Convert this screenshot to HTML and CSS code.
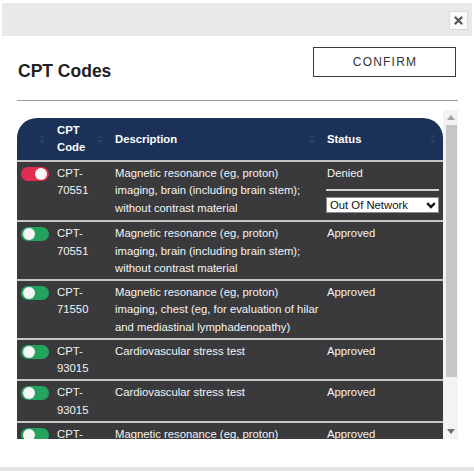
FILE: index.html
```html
<!DOCTYPE html>
<html lang="en">
<head>
<meta charset="utf-8">
<title>CPT Codes</title>
<link rel="stylesheet" href="styles.css">
</head>
<body>
<div class="modal">
  <div class="topbar">
    <button class="close" aria-label="Close">
      <svg width="9" height="9" viewBox="0 0 9 9"><path d="M1.5 1.5L7.5 7.5M7.5 1.5L1.5 7.5" stroke="#555" stroke-width="2.3" stroke-linecap="round"/></svg>
    </button>
  </div>
  <div class="head">
    <h2 class="title">CPT Codes</h2>
    <button class="confirm">CONFIRM</button>
  </div>
  <div class="divider"></div>
  <div class="scroller">
    <div class="viewport">
      <table class="codes">
        <colgroup><col class="c-toggle"><col class="c-code"><col class="c-desc"><col class="c-status"></colgroup>
        <thead>
          <tr><th class="sort"></th><th class="sort">CPT Code</th><th class="sort">Description</th><th class="sort">Status</th></tr>
        </thead>
        <tbody>
          <tr>
            <td class="tcell"><span class="toggle denied"><span class="knob"></span></span></td>
            <td>CPT-70551</td>
            <td class="desc">Magnetic resonance (eg, proton) imaging, brain (including brain stem); without contrast material</td>
            <td class="status">
              <span>Denied</span>
              <div class="status-rule"></div>
              <div class="select-wrap">
                <select class="reason"><option>Out Of Network</option></select>
                <svg class="chev" width="10" height="7" viewBox="0 0 10 7"><path d="M1.2 1.2L5 5L8.8 1.2" fill="none" stroke="#111" stroke-width="2.4"/></svg>
              </div>
            </td>
          </tr>
          <tr>
            <td class="tcell"><span class="toggle"><span class="knob"></span></span></td>
            <td>CPT-70551</td>
            <td class="desc">Magnetic resonance (eg, proton) imaging, brain (including brain stem); without contrast material</td>
            <td class="status">Approved</td>
          </tr>
          <tr>
            <td class="tcell"><span class="toggle"><span class="knob"></span></span></td>
            <td>CPT-71550</td>
            <td class="desc">Magnetic resonance (eg, proton) imaging, chest (eg, for evaluation of hilar and mediastinal lymphadenopathy)</td>
            <td class="status">Approved</td>
          </tr>
          <tr>
            <td class="tcell"><span class="toggle"><span class="knob"></span></span></td>
            <td>CPT-93015</td>
            <td class="desc">Cardiovascular stress test</td>
            <td class="status">Approved</td>
          </tr>
          <tr>
            <td class="tcell"><span class="toggle"><span class="knob"></span></span></td>
            <td>CPT-93015</td>
            <td class="desc">Cardiovascular stress test</td>
            <td class="status">Approved</td>
          </tr>
          <tr>
            <td class="tcell"><span class="toggle"><span class="knob"></span></span></td>
            <td>CPT-70553</td>
            <td class="desc">Magnetic resonance (eg, proton) imaging, brain (including brain stem); without contrast material</td>
            <td class="status">Approved</td>
          </tr>
        </tbody>
      </table>
    </div>
    <div class="scrollbar">
      <div class="sb-btn"><svg width="8" height="5" viewBox="0 0 8 5"><path d="M0 5L4 0L8 5Z" fill="#a3a3a3"/></svg></div>
      <div class="sb-thumb"></div>
      <div class="sb-space"></div>
      <div class="sb-btn"><svg width="8" height="5" viewBox="0 0 8 5"><path d="M0 0L8 0L4 5Z" fill="#6f6f6f"/></svg></div>
    </div>
  </div>
  <div class="footer"></div>
</div>
</body>
</html>
```
FILE: styles.css
```css
* { box-sizing: border-box; }
html, body { margin: 0; padding: 0; background: #fff; }
body {
  font-family: "Liberation Sans", Arial, sans-serif;
  width: 474px;
  height: 471px;
  overflow: hidden;
}
.modal { display: flex; flex-direction: column; height: 471px; }

.topbar {
  margin: 3px 2px 0;
  height: 33px;
  background: #e9e9e9;
  display: flex;
  justify-content: flex-end;
  align-items: flex-start;
  padding: 8px 4px 0 0;
}
.close {
  width: 19px;
  height: 19px;
  padding: 0;
  border: 1px solid #d9d9d9;
  background: #fbfbfb;
  display: flex;
  align-items: center;
  justify-content: center;
}

.head {
  display: flex;
  justify-content: space-between;
  align-items: flex-start;
  padding: 11px 18px 0 18px;
}
.title {
  margin: 14px 0 0;
  font-size: 17.5px;
  line-height: 20px;
  font-weight: bold;
  color: #222;
}
.confirm {
  width: 143px;
  height: 30px;
  border: 1px solid #3a3a3a;
  background: #fff;
  font-family: "Liberation Sans", Arial, sans-serif;
  font-size: 12px;
  letter-spacing: 1.2px;
  color: #333;
  padding: 0 0 1px 1px;
}

.divider {
  margin: 19px 16px 0 17px;
  height: 1px;
  background: #9e9e9e;
}

.scroller {
  margin: 9px 16px 0 17px;
  height: 329px;
  display: flex;
}
.viewport {
  width: 426px;
  overflow: hidden;
  padding-top: 8px;
}
.scrollbar {
  width: 15px;
  background: #f3f3f3;
  display: flex;
  flex-direction: column;
}
.sb-btn {
  height: 15px;
  display: flex;
  align-items: center;
  justify-content: center;
  padding-left: 1px;
}
.sb-thumb {
  height: 252px;
  margin: 0 1px 0 3px;
  background: #c6c6c6;
}
.sb-space { flex: 1; }

.codes {
  width: 426px;
  table-layout: fixed;
  border-collapse: separate;
  border-spacing: 0;
  font-size: 11.3px;
}
.c-toggle { width: 35px; }
.c-code { width: 58px; }
.c-desc { width: 212px; }
.c-status { width: 121px; }

.codes th {
  position: relative;
  height: 44px;
  padding: 0 5px;
  background: #1b3157;
  color: #fff;
  font-weight: bold;
  text-align: left;
  line-height: 17px;
  vertical-align: middle;
  border-bottom: 2px solid #c4c4c4;
}
.codes th:first-child { border-top-left-radius: 20px; }
.codes th:last-child { border-top-right-radius: 20px; }
.sort::before,
.sort::after {
  content: "";
  position: absolute;
  right: 7px;
  width: 0;
  height: 0;
  border-left: 3px solid transparent;
  border-right: 3px solid transparent;
}
.sort::before {
  top: calc(50% - 5px);
  border-bottom: 4px solid #2b3f63;
}
.sort::after {
  top: calc(50% + 1px);
  border-top: 4px solid #2b3f63;
}

.codes td {
  background: #3a3a3d;
  color: #f4f4f4;
  line-height: 17.25px;
  padding: 3px 5px 2px;
  vertical-align: top;
  border-bottom: 2px solid #c6c6c6;
}
.codes td.desc { padding-right: 2px; }
.codes td.status { padding-right: 3px; }
.codes td.tcell { padding: 5px 0 0 4px; }

.toggle {
  display: flex;
  width: 28px;
  height: 14px;
  border-radius: 7px;
  padding: 1px 2px;
  background: #23a35d;
}
.toggle.denied {
  background: #e22c4f;
  justify-content: flex-end;
}
.knob {
  width: 12px;
  height: 12px;
  border-radius: 50%;
  background: #f6f6f6;
}

.status-rule {
  margin: 7px 0 6px -1px;
  width: 113px;
  height: 2px;
  background: #d2d2d2;
}
.select-wrap {
  position: relative;
  width: 113px;
  margin: 0 0 5px -1px;
}
.reason {
  display: block;
  width: 113px;
  height: 16px;
  margin: 0;
  padding: 0 0 0 3px;
  border: 1px solid #8c8c8c;
  border-radius: 0;
  background: #fff;
  color: #111;
  font-family: "Liberation Sans", Arial, sans-serif;
  font-size: 11.3px;
  line-height: 14px;
  -webkit-appearance: none;
  appearance: none;
}
.chev {
  position: absolute;
  right: 3px;
  top: 5px;
}

.footer {
  margin-top: 28px;
  flex: 1;
  background: #e4e4e4;
}
```
